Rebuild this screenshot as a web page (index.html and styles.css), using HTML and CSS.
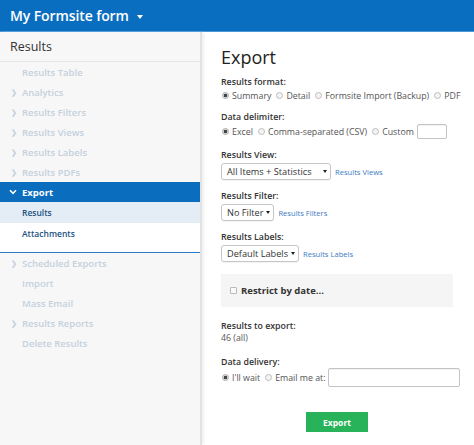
FILE: index.html
```html
<!DOCTYPE html>
<html>
<head>
<meta charset="utf-8">
<link rel="stylesheet" href="styles.css">
</head>
<body>
<header class="topbar">
  <span class="form-name">My Formsite form</span>
  <span class="caret-down"></span>
</header>
<div class="layout">
  <aside class="sidebar">
    <div class="side-title">Results</div>
    <ul class="nav">
      <li class="nav-item"><span class="chev"></span>Results Table</li>
      <li class="nav-item"><span class="chev has">&#x276F;</span>Analytics</li>
      <li class="nav-item"><span class="chev has">&#x276F;</span>Results Filters</li>
      <li class="nav-item"><span class="chev has">&#x276F;</span>Results Views</li>
      <li class="nav-item"><span class="chev has">&#x276F;</span>Results Labels</li>
      <li class="nav-item"><span class="chev has">&#x276F;</span>Results PDFs</li>
    </ul>
    <div class="nav-open">
      <div class="nav-item active"><span class="chev open"><svg width="8" height="6" viewBox="0 0 8 6"><path d="M1 1.2 L4 4.4 L7 1.2" fill="none" stroke="#fff" stroke-width="1.6"/></svg></span>Export</div>
      <div class="sub-item current">Results</div>
      <div class="sub-item">Attachments</div>
    </div>
    <ul class="nav">
      <li class="nav-item"><span class="chev has">&#x276F;</span>Scheduled Exports</li>
      <li class="nav-item"><span class="chev"></span>Import</li>
      <li class="nav-item"><span class="chev"></span>Mass Email</li>
      <li class="nav-item"><span class="chev has">&#x276F;</span>Results Reports</li>
      <li class="nav-item"><span class="chev"></span>Delete Results</li>
    </ul>
  </aside>
  <main class="main">
    <h1 class="title">Export</h1>

    <div class="label first">Results format:</div>
    <div class="radio-row">
      <span class="radio on"></span><span class="opt">Summary</span>
      <span class="radio"></span><span class="opt">Detail</span>
      <span class="radio"></span><span class="opt">Formsite Import (Backup)</span>
      <span class="radio"></span><span class="opt">PDF</span>
    </div>

    <div class="label">Data delimiter:</div>
    <div class="radio-row tall">
      <span class="radio on"></span><span class="opt">Excel</span>
      <span class="radio"></span><span class="opt">Comma-separated (CSV)</span>
      <span class="radio"></span><span class="opt">Custom</span>
      <span class="text-box custom"></span>
    </div>

    <div class="label group">Results View:</div>
    <div class="select-row">
      <span class="select w-view">All Items + Statistics<span class="tri"></span></span>
      <span class="link">Results Views</span>
    </div>

    <div class="label group">Results Filter:</div>
    <div class="select-row">
      <span class="select">No Filter<span class="tri"></span></span>
      <span class="link">Results Filters</span>
    </div>

    <div class="label group">Results Labels:</div>
    <div class="select-row">
      <span class="select">Default Labels<span class="tri"></span></span>
      <span class="link">Results Labels</span>
    </div>

    <div class="restrict">
      <span class="checkbox"></span><span class="restrict-text">Restrict by date...</span>
    </div>

    <div class="label count-label">Results to export:</div>
    <div class="count">46 (all)</div>

    <div class="label group2">Data delivery:</div>
    <div class="radio-row delivery">
      <span class="radio on"></span><span class="opt">I'll wait</span>
      <span class="radio"></span><span class="opt">Email me at:</span>
      <span class="text-box email"></span>
    </div>

    <div class="actions">
      <span class="btn">Export</span>
    </div>
  </main>
</div>
</body>
</html>
```

FILE: styles.css
```css
* { box-sizing: border-box; }
html, body {
  margin: 0;
  padding: 0;
  width: 474px;
  height: 445px;
  overflow: hidden;
  background: #fff;
  font-family: "Open Sans", "Liberation Sans", sans-serif;
}

.topbar {
  height: 32px;
  background: #0a6ec0;
  border-bottom: 1px solid #4b98d6;
  display: flex;
  align-items: center;
  padding-left: 10px;
  color: #fff;
}
.form-name {
  font-size: 14px;
  font-weight: 600;
  letter-spacing: -0.1px;
}
.caret-down {
  width: 0;
  height: 0;
  border-left: 3px solid transparent;
  border-right: 3px solid transparent;
  border-top: 4px solid #fff;
  margin-left: 8px;
  margin-top: 2px;
}

.layout {
  display: flex;
  height: 413px;
}

.sidebar {
  width: 202px;
  flex: none;
  background: #f7f7f7;
  border-right: 2px solid #e2e2e2;
  box-shadow: 3px 0 2px -1px #f0f0f0;
}
.side-title {
  height: 30px;
  padding-left: 10px;
  font-size: 12.5px;
  color: #333;
  display: flex;
  align-items: center;
  border-bottom: 1px solid #e6e6e6;
}
.nav {
  list-style: none;
  margin: 0;
  padding: 0;
}
.nav-item {
  height: 20px;
  display: flex;
  align-items: center;
  font-size: 9.5px;
  font-weight: 600;
  color: #c5d1dd;
}
.chev {
  width: 22px;
  padding-left: 11px;
  font-size: 6.5px;
  color: #c5d1dd;
  display: flex;
  align-items: center;
}
.chev.open { padding-left: 9px; }
.nav-open {
  background: #fff;
  border-bottom: 1px solid #2d7cc4;
  padding-bottom: 8px;
}
.nav-item.active {
  background: #0b6dbe;
  color: #fff;
  font-weight: 700;
}
.sub-item {
  height: 21px;
  padding-left: 22px;
  display: flex;
  align-items: center;
  font-size: 8.5px;
  font-weight: 600;
  color: #21517f;
}
.sub-item.current { background: #e4edf6; }

.main {
  flex: 1;
  padding-left: 19px;
  color: #333;
}
.title {
  font-size: 18px;
  font-weight: 400;
  line-height: 22px;
  margin: 14px 0 0 0;
  color: #222;
}
.label {
  font-size: 8.8px;
  font-weight: 600;
  line-height: 12px;
  color: #333;
  margin-top: 9px;
}
.label.first { margin-top: 8px; }
.label.group { margin-top: 10px; }
.radio-row {
  display: flex;
  align-items: center;
  height: 13px;
  margin-top: 1px;
  font-size: 8.8px;
  color: #555;
  white-space: nowrap;
}
.radio-row.tall { height: 15px; }
.radio {
  width: 7px;
  height: 7px;
  border-radius: 50%;
  border: 1px solid #bdbdbd;
  background: #f3f3f3;
  margin-left: 1px;
  margin-right: 3px;
  flex: none;
}
.radio.on {
  background: radial-gradient(circle, #444 0 1.6px, #e8e8e8 2.1px);
  border-color: #aaa;
}
.opt { margin-right: 4px; }
.text-box {
  display: inline-block;
  border: 1px solid #c4c4c4;
  border-radius: 2px;
  background: #fff;
  box-shadow: inset 0 1px 1px rgba(0,0,0,0.06);
  flex: none;
}
.text-box.custom { width: 30px; height: 15px; margin-left: -1px; }

.select-row {
  display: flex;
  align-items: center;
  margin-top: 2px;
  white-space: nowrap;
}
.select {
  height: 17px;
  border: 1px solid #c6c6c6;
  border-radius: 3px;
  background: #fff;
  font-size: 9.2px;
  color: #333;
  display: flex;
  align-items: center;
  justify-content: space-between;
  padding: 0 3px 0 5px;
  box-shadow: 0 1px 1px rgba(0,0,0,0.05);
  white-space: nowrap;
  flex: none;
}
.w-view { width: 110px; }
.tri {
  width: 0;
  height: 0;
  border-left: 2px solid transparent;
  border-right: 2px solid transparent;
  border-top: 3.5px solid #222;
  margin-left: 3px;
}
.link {
  font-size: 7.6px;
  color: #3e7cc2;
  margin-left: 4px;
}

.restrict {
  margin-top: 12px;
  width: 232px;
  height: 33px;
  background: #f5f5f5;
  display: flex;
  align-items: center;
  padding-left: 9px;
}
.checkbox {
  width: 7px;
  height: 7px;
  border: 1px solid #b9b9b9;
  border-radius: 1px;
  background: #fafafa;
  margin-right: 4px;
}
.restrict-text {
  font-size: 9.5px;
  font-weight: 700;
  color: #333;
}
.label.count-label { margin-top: 13px; }
.count {
  font-size: 8.8px;
  line-height: 13px;
  color: #555;
}
.label.group2 { margin-top: 11px; }
.radio-row.delivery {
  height: 19px;
  margin-top: 0;
}
.text-box.email {
  width: 132px;
  height: 19px;
  margin-left: -2px;
}

.actions {
  width: 232px;
  display: flex;
  justify-content: center;
  margin-top: 25px;
}
.btn {
  width: 62px;
  height: 20px;
  background: #28b35b;
  color: #fff;
  font-size: 8.5px;
  font-weight: 700;
  display: flex;
  align-items: center;
  justify-content: center;
}
```
